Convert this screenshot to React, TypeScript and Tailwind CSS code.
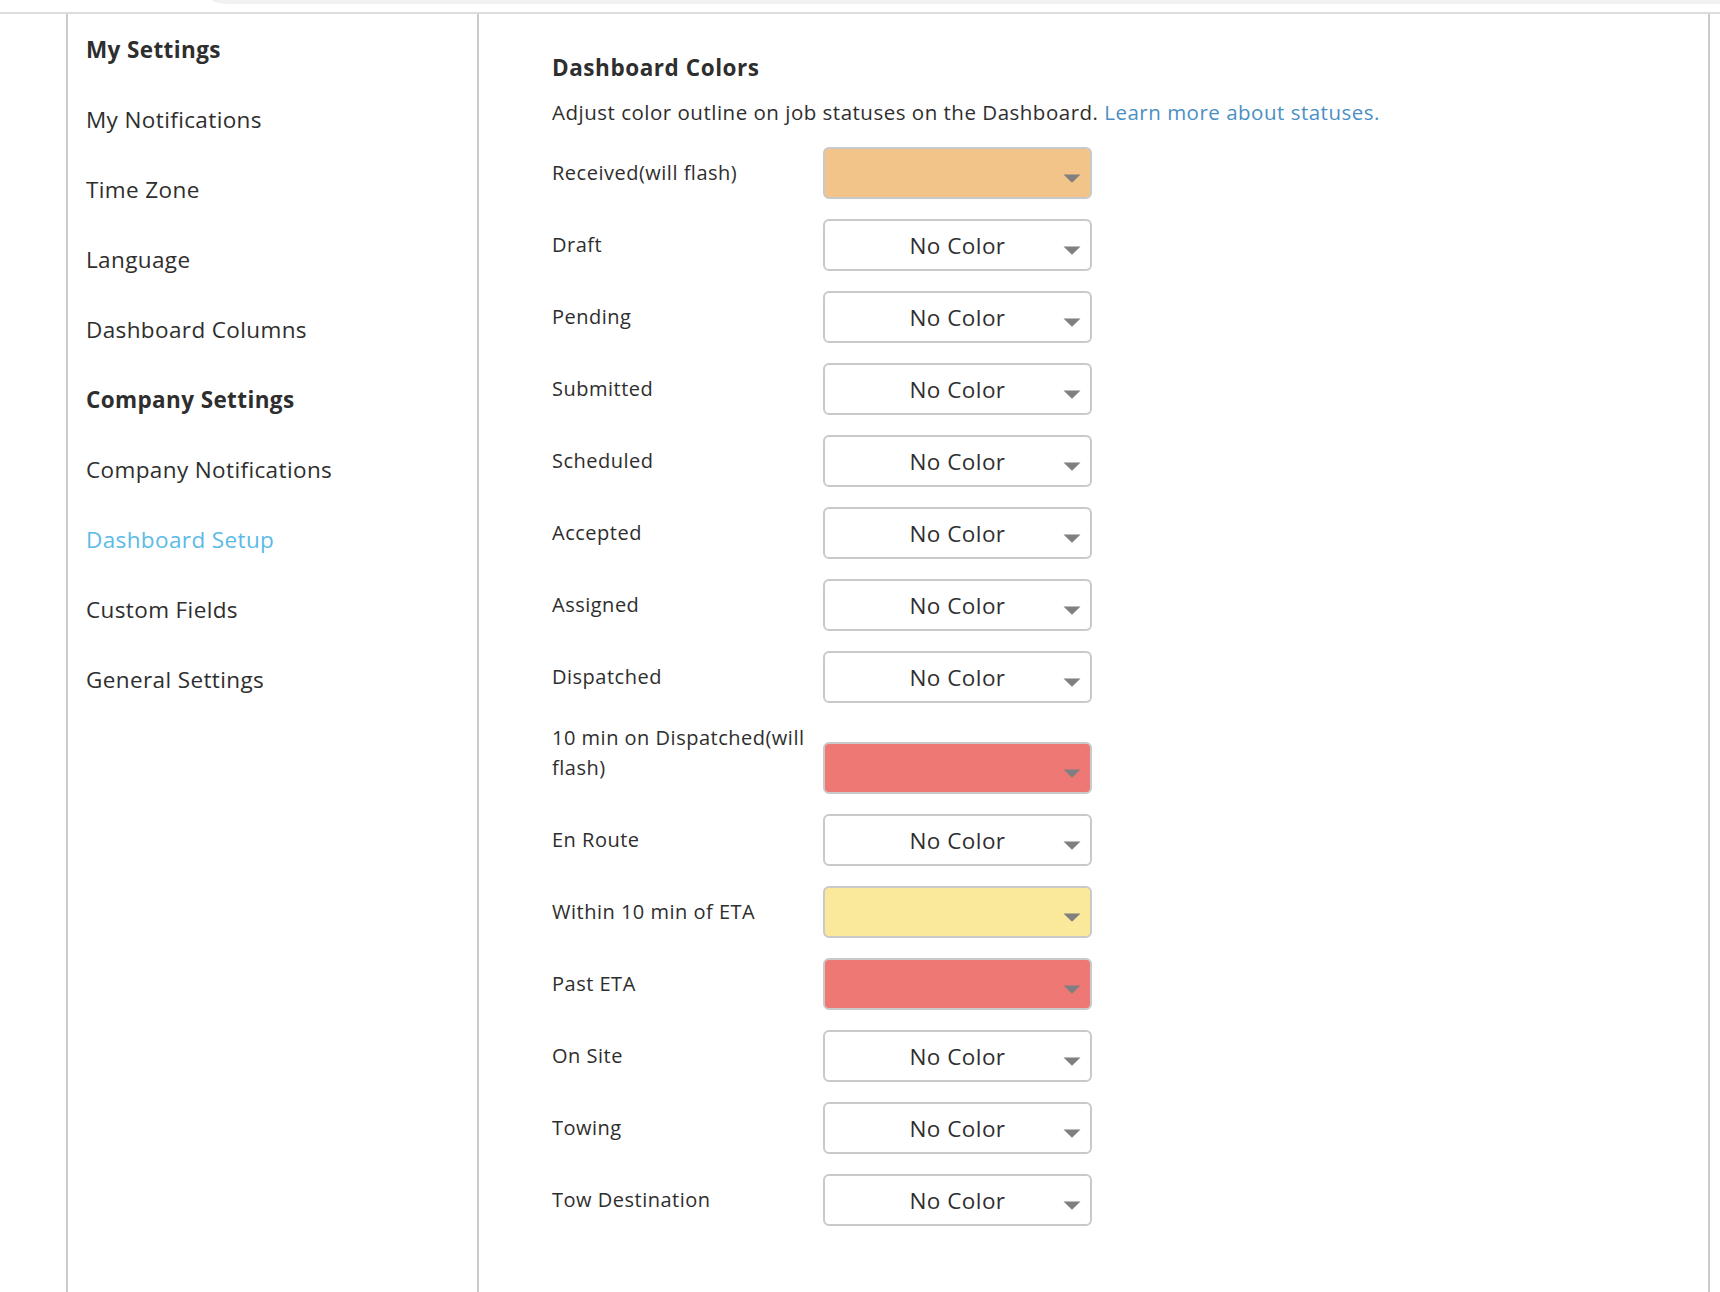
import React from "react";

type Row = { label: string; color?: string };

const rows: Row[] = [
  { label: "Received(will flash)", color: "bg-[#f2c489]" },
  { label: "Draft" },
  { label: "Pending" },
  { label: "Submitted" },
  { label: "Scheduled" },
  { label: "Accepted" },
  { label: "Assigned" },
  { label: "Dispatched" },
  { label: "10 min on Dispatched(will flash)", color: "bg-[#ee7974]" },
  { label: "En Route" },
  { label: "Within 10 min of ETA", color: "bg-[#fbe99b]" },
  { label: "Past ETA", color: "bg-[#ee7974]" },
  { label: "On Site" },
  { label: "Towing" },
  { label: "Tow Destination" },
];

type Nav = { t: string; bold?: boolean; active?: boolean };
const nav: Nav[] = [
  { t: "My Settings", bold: true },
  { t: "My Notifications" },
  { t: "Time Zone" },
  { t: "Language" },
  { t: "Dashboard Columns" },
  { t: "Company Settings", bold: true },
  { t: "Company Notifications" },
  { t: "Dashboard Setup", active: true },
  { t: "Custom Fields" },
  { t: "General Settings" },
];

function Caret() {
  return (
    <svg width="18" height="9" viewBox="0 0 18 9" className="absolute right-[9px] top-[25px]">
      <polygon points="0.5,0.5 17.5,0.5 9,8.7" fill="#7f7f7f" />
    </svg>
  );
}

function ColorSelect({ color }: { color?: string }) {
  return (
    <div
      className={
        "relative w-[269px] h-[52px] shrink-0 rounded-[6px] border-2 border-[#c9c9c9] flex items-center justify-center " +
        (color ? color : "bg-white")
      }
    >
      {!color && (
        <span className="pt-[2px] text-[22.5px] leading-[30px] tracking-[0.45px] text-[#2e2e2e]">No Color</span>
      )}
      <Caret />
    </div>
  );
}

export default function App() {
  return (
    <div className="w-[1720px] h-[1292px] bg-white overflow-hidden font-['Open_Sans',sans-serif] text-[#2e2e2e]">
      <div className="h-[4px] flex">
        <div className="ml-[212px] flex-1 bg-[#f0f1f3] rounded-bl-[20px_4px]" />
      </div>
      <div className="h-[8px]" />
      <div className="h-[2px] bg-[#dddde0]" />
      <div className="flex h-[1278px]">
        <div className="w-[66px] shrink-0" />
        <aside className="w-[413px] shrink-0 border-l-2 border-r-2 border-[#cbcbcb] pl-[18px] pt-[21px] flex flex-col gap-[40px]">
          {nav.map((n) => (
            <div
              key={n.t}
              className={
                "text-[22.5px] leading-[30px] tracking-[0.38px] " +
                (n.bold ? "font-bold text-[#2e2e2e]" : n.active ? "text-[#5bbbe6]" : "text-[#2e2e2e]")
              }
            >
              {n.t}
            </div>
          ))}
        </aside>
        <main className="flex-1 border-r-2 border-[#cbcbcb] pl-[73px] pt-[39px]">
          <h2 className="text-[22.5px] leading-[30px] font-bold tracking-[0.55px] text-[#2e2e2e]">
            Dashboard Colors
          </h2>
          <p className="mt-[14px] text-[20.5px] leading-[30px] tracking-[0.5px] text-[#2e2e2e]">
            Adjust color outline on job statuses on the Dashboard.{" "}
            <span className="text-[#4b8fc4]">Learn more about statuses.</span>
          </p>
          <div className="mt-[20px] flex flex-col gap-[20px]">
            {rows.map((r) => (
              <div key={r.label} className="flex items-end">
                <div className="w-[264px] mr-[7px] pb-[11px] text-[20px] leading-[30px] tracking-[0.5px] text-[#2e2e2e]">
                  {r.label}
                </div>
                <ColorSelect color={r.color} />
              </div>
            ))}
          </div>
        </main>
        <div className="w-[10px] shrink-0" />
      </div>
    </div>
  );
}
